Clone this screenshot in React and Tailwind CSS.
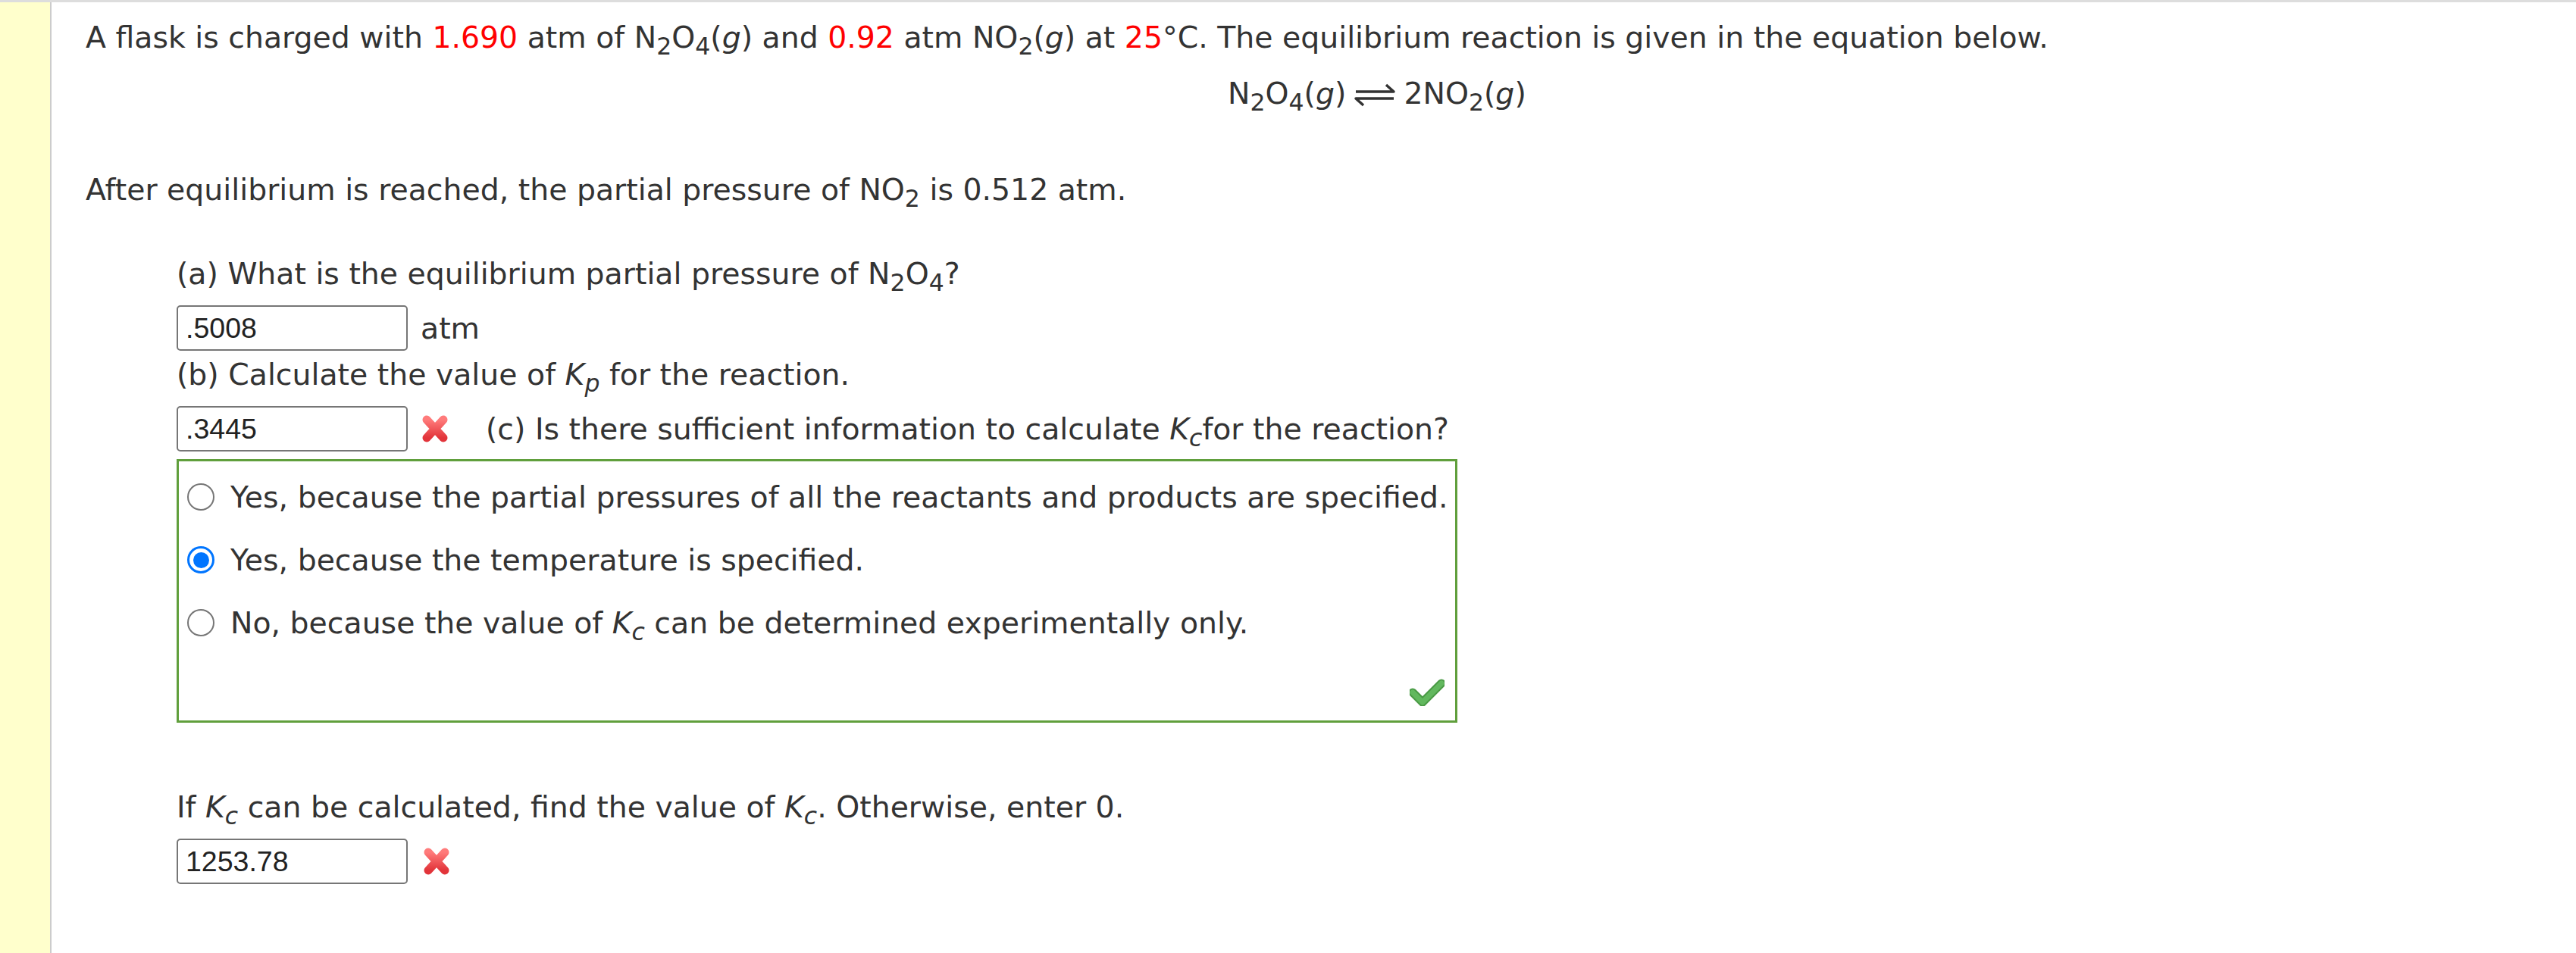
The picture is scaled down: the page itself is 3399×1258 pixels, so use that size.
import React from "react";

const Sub = ({ children, italic }) => (
  <span className={`relative top-[0.3em] text-[0.8em] leading-none ${italic ? "italic" : ""}`}>
    {children}
  </span>
);

const G = () => (
  <>
    (<span className="italic">g</span>)
  </>
);

const K = ({ s }) => (
  <>
    <span className="italic">K</span>
    <Sub italic>{s}</Sub>
  </>
);

// equilibrium harpoons
const Harpoons = () => (
  <svg width="56" height="32" viewBox="0 0 56 32" className="inline-block align-[-4px] mx-[10px]">
    <path d="M3 12 H53 L43 3" stroke="#333" strokeWidth="3.5" fill="none" strokeLinejoin="round" />
    <path d="M53 21 H3 L13 30" stroke="#333" strokeWidth="3.5" fill="none" strokeLinejoin="round" />
  </svg>
);

const RedX = () => (
  <svg width="40" height="40" viewBox="0 0 40 40" className="shrink-0">
    <defs>
      <linearGradient id="xg" x1="0" y1="0" x2="0" y2="1">
        <stop offset="0" stopColor="#ff7b7b" />
        <stop offset="1" stopColor="#e2343a" />
      </linearGradient>
    </defs>
    <path
      d="M9 8 L31 32 M31 8 L9 32"
      stroke="url(#xg)"
      strokeWidth="11"
      strokeLinecap="round"
      fill="none"
    />
  </svg>
);

const Check = () => (
  <svg width="46" height="36" viewBox="0 0 46 36">
    <path
      d="M4 18 L17 31 L42 6"
      stroke="#4a9a45"
      strokeWidth="11"
      strokeLinecap="round"
      strokeLinejoin="round"
      fill="none"
    />
    <path
      d="M4 18 L17 31 L42 6"
      stroke="#62b85e"
      strokeWidth="7"
      strokeLinecap="round"
      strokeLinejoin="round"
      fill="none"
    />
  </svg>
);

const Input = ({ value }) => (
  <div className="w-[305px] h-[60px] shrink-0 border-[2.5px] border-[#767676] rounded-[5px] bg-white flex items-center pl-[10px] text-[37.5px] text-[#222] font-['Liberation_Sans',Arial,sans-serif]">
    {value}
  </div>
);

const Radio = ({ checked }) =>
  checked ? (
    <div className="w-[36px] h-[36px] shrink-0 rounded-full border-[3px] border-[#0075ff] bg-white flex items-center justify-center">
      <div className="w-[21px] h-[21px] rounded-full bg-[#0075ff]" />
    </div>
  ) : (
    <div className="w-[36px] h-[36px] shrink-0 rounded-full border-[2.5px] border-[#767676] bg-white" />
  );

const Option = ({ checked, children }) => (
  <div className="flex items-center h-[56px]">
    <div className="ml-[11px] mr-[21px]">
      <Radio checked={checked} />
    </div>
    <span>{children}</span>
  </div>
);

export default function App() {
  return (
    <div className="min-h-screen flex border-t-[3px] border-[#dddddd] bg-white text-[#333333] text-[39.4px] leading-[56px] font-['DejaVu_Sans',Verdana,sans-serif]">
      <div className="w-[66px] shrink-0 bg-[#ffffcc]" />
      <div className="w-[2px] shrink-0 bg-[#cccccc]" />
      <div className="flex-1 pl-[45px] pt-[18px]">
        <div className="whitespace-nowrap">
          A flask is charged with <span className="text-[#ff0000]">1.690</span> atm of N<Sub>2</Sub>O<Sub>4</Sub>
          <G /> and <span className="text-[#ff0000]">0.92</span> atm NO<Sub>2</Sub>
          <G /> at <span className="text-[#ff0000]">25</span>°C. The equilibrium reaction is given in the equation below.
        </div>
        <div className="mt-[18px] ml-[1507px] whitespace-nowrap">
          N<Sub>2</Sub>O<Sub>4</Sub>
          <G />
          <Harpoons />
          2NO<Sub>2</Sub>
          <G />
        </div>
        <div className="mt-[71px] whitespace-nowrap">
          After equilibrium is reached, the partial pressure of NO<Sub>2</Sub> is 0.512 atm.
        </div>

        <div className="ml-[120px]">
          <div className="mt-[55px] whitespace-nowrap">
            (a) What is the equilibrium partial pressure of N<Sub>2</Sub>O<Sub>4</Sub>?
          </div>
          <div className="mt-[14px] flex items-center gap-[17px]">
            <Input value=".5008" />
            <span>atm</span>
          </div>
          <div className="mt-[3px] whitespace-nowrap">
            (b) Calculate the value of <K s="p" /> for the reaction.
          </div>
          <div className="mt-[14px] flex items-center">
            <Input value=".3445" />
            <div className="ml-[16px] mr-[47px]">
              <RedX />
            </div>
            <span className="whitespace-nowrap">
              (c) Is there sufficient information to calculate <K s="c" />for the reaction?
            </span>
          </div>

          <div className="mt-[10px] w-[1690px] border-[3px] border-[#609f3c] pt-[19px] pb-[19px] pr-[14px]">
            <div className="flex flex-col gap-[27px] whitespace-nowrap">
              <Option>Yes, because the partial pressures of all the reactants and products are specified.</Option>
              <Option checked>Yes, because the temperature is specified.</Option>
              <Option>
                No, because the value of <K s="c" /> can be determined experimentally only.
              </Option>
            </div>
            <div className="mt-[46px] flex justify-end">
              <Check />
            </div>
          </div>

          <div className="mt-[83px] whitespace-nowrap">
            If <K s="c" /> can be calculated, find the value of <K s="c" />. Otherwise, enter 0.
          </div>
          <div className="mt-[14px] flex items-center">
            <Input value="1253.78" />
            <div className="ml-[18px]">
              <RedX />
            </div>
          </div>
        </div>
      </div>
    </div>
  );
}
